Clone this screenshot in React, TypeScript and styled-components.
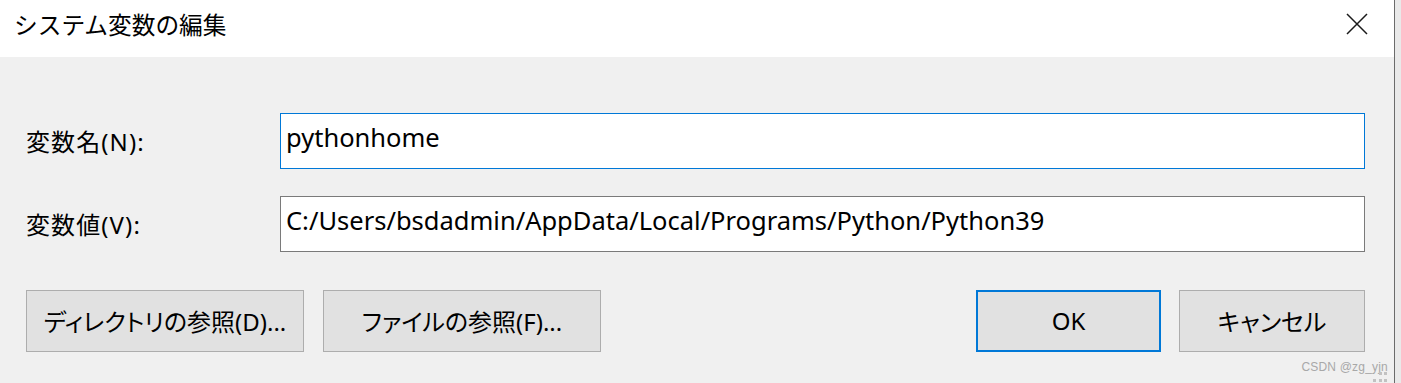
import * as React from 'react'
import styled, { createGlobalStyle } from 'styled-components'

const UI_FONT = `"Noto Sans", "Noto Sans CJK JP", sans-serif`

const GlobalStyle = createGlobalStyle`
  html, body {
    margin: 0;
    padding: 0;
    background: #e9e9e9;
  }
  body {
    font-family: ${UI_FONT};
    color: #000;
  }
`

const Page = styled.div`
  display: flex;
  width: 1401px;
  height: 383px;
  overflow: hidden;
`

const Window = styled.div`
  position: relative;
  display: flex;
  flex-direction: column;
  width: 1394px;
  height: 383px;
  background: #f0f0f0;
  border-right: 1px solid #6b6b6b;
`

const TitleBar = styled.div`
  display: flex;
  align-items: center;
  justify-content: space-between;
  height: 57px;
  padding: 0 26px 0 14px;
  background: #fff;
`

const Title = styled.div`
  font-size: 23.7px;
  line-height: 1;
  margin-top: -6px;
`

const CloseButton = styled.div`
  display: flex;
  margin-top: -10px;
`

const Body = styled.div`
  display: flex;
  flex-direction: column;
  padding: 56px 29px 0 26px;
`

const FieldRow = styled.div`
  display: grid;
  grid-template-columns: 254px 1fr;
  align-items: center;
  margin-bottom: 27px;
`

const Label = styled.div`
  font-size: 24px;
  letter-spacing: 1.1px;
  padding-bottom: 2px;
`

const TextBox = styled.div<{ $focused?: boolean }>`
  box-sizing: border-box;
  height: 56px;
  display: flex;
  align-items: center;
  padding: 0 5px 8px;
  background: #fff;
  border: 1px solid ${p => (p.$focused ? '#0078d7' : '#7a7a7a')};
  font-size: 25.5px;
`

const ButtonRow = styled.div`
  display: flex;
  justify-content: space-between;
  margin-top: 11px;
`

const ButtonGroup = styled.div<{ $gap: number }>`
  display: flex;
  gap: ${p => p.$gap}px;
`

const Button = styled.div<{ $width: number; $default?: boolean }>`
  box-sizing: border-box;
  width: ${p => p.$width}px;
  height: 62px;
  display: flex;
  align-items: center;
  justify-content: center;
  background: #e1e1e1;
  border: ${p => (p.$default ? '2px solid #0078d7' : '1px solid #adadad')};
  font-size: 24px;
  font-feature-settings: "palt";
  padding-bottom: 2px;
`

const Watermark = styled.div`
  position: absolute;
  right: 6px;
  bottom: 9px;
  font-family: "Liberation Sans", Arial, sans-serif;
  font-size: 12px;
  color: #a8a8a8;
  letter-spacing: 0.2px;
`

const Grip = styled.svg`
  position: absolute;
  right: 6px;
  bottom: 0;
`

function CloseIcon(){
  return (
    <svg width="22" height="22" viewBox="0 0 22 22">
      <path d="M1 1 L21 21 M21 1 L1 21" stroke="#1a1a1a" strokeWidth="1.5" fill="none" />
    </svg>
  )
}

export default function App(){
  return (
    <Page>
      <GlobalStyle />
      <Window>
        <TitleBar>
          <Title>システム変数の編集</Title>
          <CloseButton><CloseIcon /></CloseButton>
        </TitleBar>

        <Body>
          <FieldRow>
            <Label>変数名(N):</Label>
            <TextBox $focused>pythonhome</TextBox>
          </FieldRow>

          <FieldRow>
            <Label>変数値(V):</Label>
            <TextBox>C:/Users/bsdadmin/AppData/Local/Programs/Python/Python39</TextBox>
          </FieldRow>

          <ButtonRow>
            <ButtonGroup $gap={19}>
              <Button $width={278}>ディレクトリの参照(D)...</Button>
              <Button $width={278}>ファイルの参照(F)...</Button>
            </ButtonGroup>
            <ButtonGroup $gap={18}>
              <Button $width={185} $default>OK</Button>
              <Button $width={186}>キャンセル</Button>
            </ButtonGroup>
          </ButtonRow>
        </Body>

        <Watermark>CSDN @zg_yjn</Watermark>
        <Grip width="16" height="11" viewBox="0 0 16 11">
          <rect x="7" y="0" width="3" height="3" fill="#c2c2c2" />
          <rect x="12" y="0" width="3" height="3" fill="#c2c2c2" />
          <rect x="1" y="7" width="3" height="3" fill="#c2c2c2" />
          <rect x="7" y="7" width="3" height="3" fill="#c2c2c2" />
          <rect x="12" y="7" width="3" height="3" fill="#c2c2c2" />
        </Grip>
      </Window>
    </Page>
  )
}
